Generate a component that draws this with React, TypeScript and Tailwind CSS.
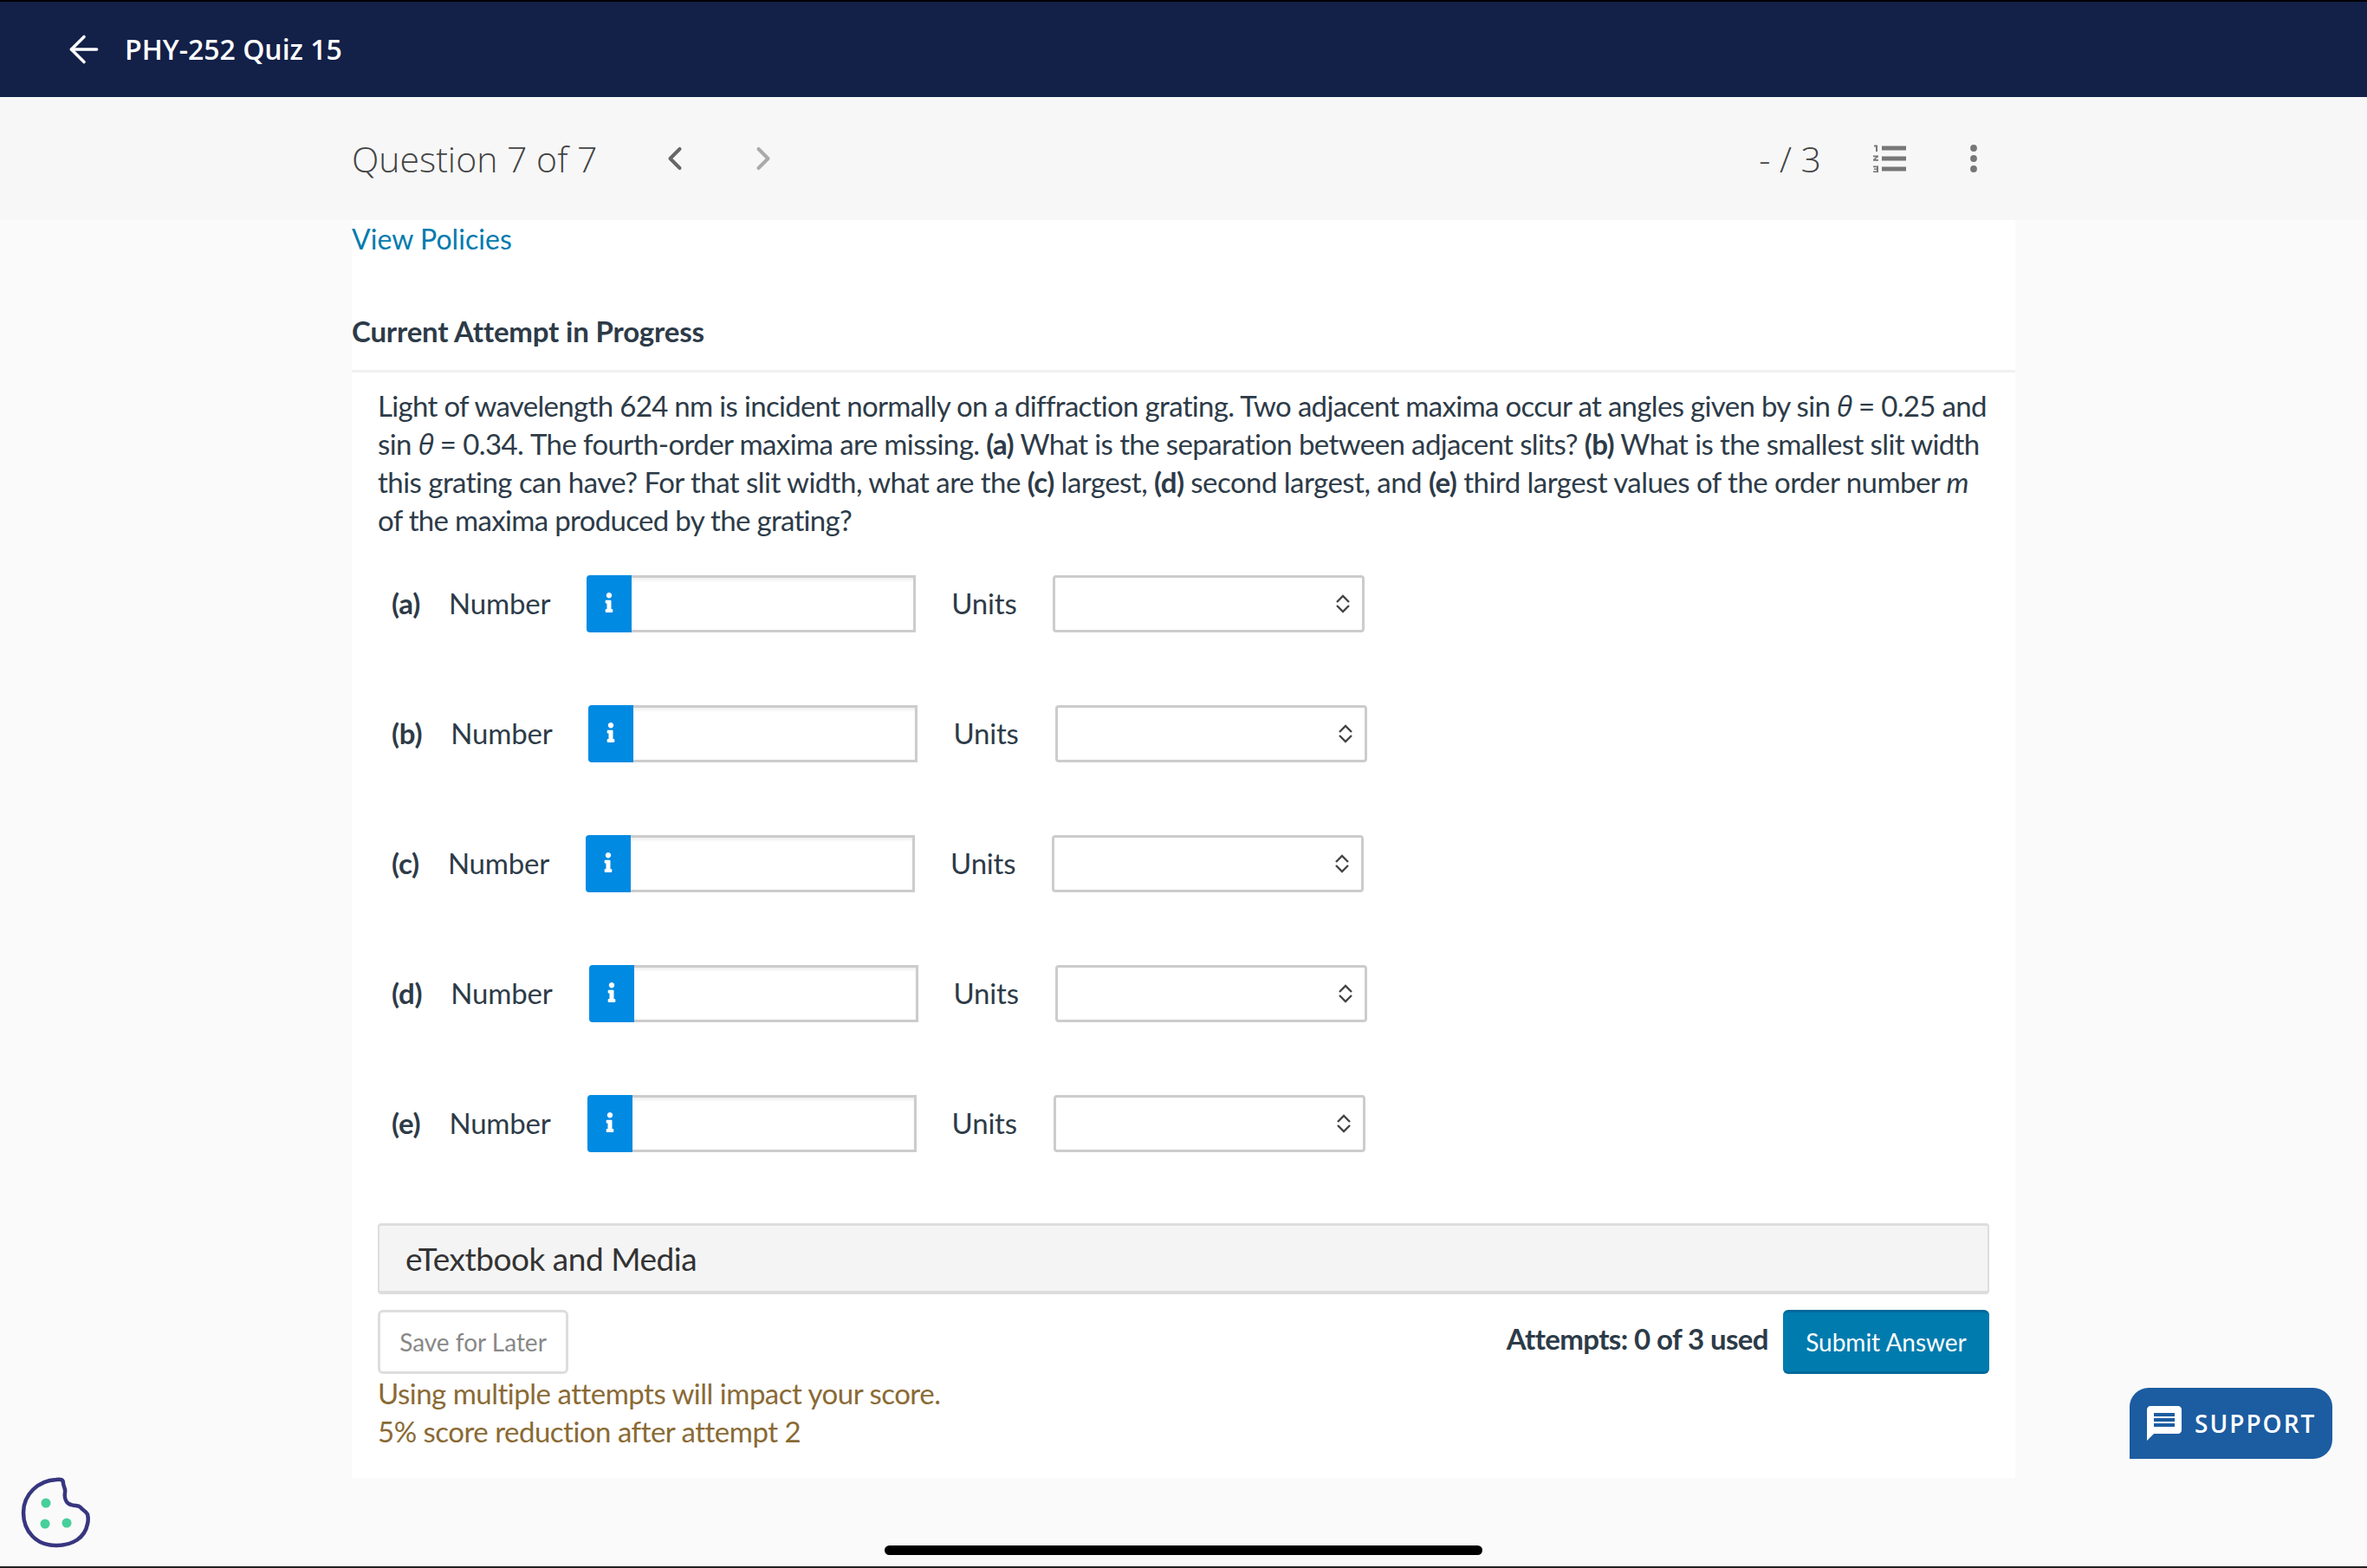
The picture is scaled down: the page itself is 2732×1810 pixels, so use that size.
import { ArrowLeft, ChevronLeft, ChevronRight } from 'lucide-react';
import { FaInfo } from 'react-icons/fa';
import { MdMessage } from 'react-icons/md';

const parts = ['a', 'b', 'c', 'd', 'e'];

const OrderedListIcon = () => (
  <svg width="38" height="32" viewBox="0 0 38 32" fill="#777">
    <rect x="10" y="1.5" width="28" height="5" />
    <rect x="10" y="13.5" width="28" height="5" />
    <rect x="10" y="25.5" width="28" height="5" />
    <path d="M1 0.5h4v7.5H3V2.4H1zM0 12.5h6v1.6L2.6 17H6v1.8H0v-1.7L3.4 14.2H0zM0 24.5h6v7.5H0v-1.6h4v-1.5H1v-1.3h3v-1.4H0z" />
  </svg>
);

const KebabIcon = () => (
  <svg width="8" height="32" viewBox="0 0 8 32" fill="#777">
    <circle cx="4" cy="4" r="3.9" />
    <circle cx="4" cy="16" r="3.9" />
    <circle cx="4" cy="28" r="3.9" />
  </svg>
);

const SelectArrows = () => (
  <svg width="20" height="22" viewBox="0 0 20 22" fill="none" stroke="#444" strokeWidth="2.4">
    <path d="M3 9l7-7 7 7M3 13l7 7 7-7" />
  </svg>
);

const CookieIcon = () => (
  <svg width="82" height="82" viewBox="0 0 82 82" fill="none">
    <path
      d="M41 3C46 2 49 3 49 7C49 11 52 13 51 18C50 24 52 30 58 32C63 34 66 32 69 35C71 38 75 39 77 43C78 47 78 50 77 54C74 70 60 79 41 79C18 79 3 63 3 41C3 20 20 4 41 3Z"
      stroke="#37367f"
      strokeWidth="4.5"
    />
    <circle cx="29" cy="30" r="5.5" fill="#46cf9b" />
    <circle cx="28" cy="54" r="5.5" fill="#46cf9b" />
    <circle cx="53" cy="53" r="5.5" fill="#46cf9b" />
  </svg>
);

const Theta = () => <i className="font-['Open_Sans',sans-serif] leading-[0]">θ</i>;

const AnswerRow = ({ part }: { part: string }) => (
  <div className="flex items-center h-[66px] pl-[16px] text-[33px] tracking-[-0.2px] text-[#2d3b48]">
    <span className="font-bold mr-[33px]">({part})</span>
    <span className="mr-[42px]">Number</span>
    <div className="flex h-[66px] w-[380px]">
      <div className="flex w-[52px] items-center justify-center rounded-l-[4px] bg-[#008ae2] pb-[4px]">
        <FaInfo className="w-[12px] h-[23px] text-white" />
      </div>
      <div className="flex-1 border-y-[3px] border-r-[3px] border-[#ccc] bg-white shadow-[inset_0_3px_3px_#f1f1f1]" />
    </div>
    <span className="ml-[41px] mr-[42px]">Units</span>
    <div className="flex h-[66px] w-[360px] items-center justify-end rounded-[4px] border-[3px] border-[#ccc] bg-white pr-[12px]">
      <SelectArrows />
    </div>
  </div>
);

export default function App() {
  return (
    <div className="relative h-[1810px] overflow-hidden bg-[#fafafa] font-['Lato',sans-serif]">
      {/* Top bar */}
      <header className="flex h-[112px] items-center border-t-[2px] border-black bg-[#132048] pl-[72px] text-white">
        <ArrowLeft className="w-[50px] h-[50px]" strokeWidth={1.7} />
        <span className="ml-[22px] font-['Open_Sans',sans-serif] text-[32px] font-semibold">PHY-252 Quiz 15</span>
      </header>

      {/* Question bar */}
      <div className="h-[142px] bg-[#f7f7f7]">
        <div className="mx-auto flex h-full w-[1920px] items-center">
          <span className="w-[351px] pt-[2px] font-['Open_Sans',sans-serif] text-[41px] font-light text-[#444]">Question 7 of 7</span>
          <ChevronLeft className="w-[44px] h-[44px] text-[#666]" strokeWidth={2.2} />
          <ChevronRight className="ml-[58px] w-[44px] h-[44px] text-[#aaa]" strokeWidth={2.2} />
          <span className="ml-auto pt-[2px] font-['Open_Sans',sans-serif] text-[41px] font-light text-[#444]">- / 3</span>
          <div className="ml-[60px] flex"><OrderedListIcon /></div>
          <div className="ml-[74px] mr-[44px] flex"><KebabIcon /></div>
        </div>
      </div>

      {/* Content card */}
      <main className="mx-auto h-[1452px] w-[1920px] bg-white">
        <a className="block text-[32px] leading-[44px] tracking-[0.05px] text-[#007bae]">View Policies</a>
        <h2 className="mt-[62px] h-[70px] border-b-[3px] border-[#f0f0f0] text-[33px] font-bold leading-[44px] tracking-[-0.18px] text-[#2d3b48]">
          Current Attempt in Progress
        </h2>
        <div className="px-[30px]">
          <p className="mt-[16px] whitespace-nowrap text-[33px] leading-[44px] text-[#2d3b48]">
            <span className="block tracking-[-0.68px]">Light of wavelength 624 nm is incident normally on a diffraction grating. Two adjacent maxima occur at angles given by sin <Theta /> = 0.25 and</span>
            <span className="block tracking-[-0.61px]">sin <Theta /> = 0.34. The fourth-order maxima are missing. <b>(a)</b> What is the separation between adjacent slits? <b>(b)</b> What is the smallest slit width</span>
            <span className="block tracking-[-0.53px]">this grating can have? For that slit width, what are the <b>(c)</b> largest, <b>(d)</b> second largest, and <b>(e)</b> third largest values of the order number <i>m</i></span>
            <span className="block tracking-[-0.68px]">of the maxima produced by the grating?</span>
          </p>
          <div className="mt-[42px] flex flex-col gap-[84px]">
            {parts.map((part) => (
              <AnswerRow key={part} part={part} />
            ))}
          </div>

          <div className="mt-[82px] flex h-[82px] items-center rounded-[4px] border-t-[3px] border-b-[4px] border-x-[2px] border-[#ddd] bg-[#f4f4f4] pl-[30px] text-[37px] tracking-[-0.47px] text-[#333]">
            eTextbook and Media
          </div>

          <div className="mt-[18px] flex items-start">
            <button className="h-[74px] w-[220px] rounded-[6px] border-[3px] border-[#ddd] bg-white text-[28px] text-[#888]">Save for Later</button>
            <span className="ml-auto mt-[11px] text-[33px] font-bold leading-[44px] tracking-[-0.6px] text-[#2d3b48]">Attempts: 0 of 3 used</span>
            <button className="ml-[17px] h-[74px] w-[238px] rounded-[6px] border-y-[3px] border-[#00699a] bg-[#007bae] text-[28px] text-white">Submit Answer</button>
          </div>
          <p className="mt-0 text-[33px] leading-[44px] tracking-[-0.5px] text-[#8a6a35]">
            Using multiple attempts will impact your score.<br />
            5% score reduction after attempt 2
          </p>
        </div>
      </main>

      {/* Floating items */}
      <div className="absolute left-[24px] top-[1705px]"><CookieIcon /></div>
      <button className="absolute left-[2458px] top-[1602px] flex h-[82px] w-[234px] items-center rounded-t-[22px] rounded-br-[22px] bg-[#1c5ca0] pl-[16px] font-['Open_Sans',sans-serif] text-[28px] font-semibold tracking-[2px] text-white">
        <MdMessage className="w-[48px] h-[48px]" />
        <span className="ml-[11px]">SUPPORT</span>
      </button>
      <div className="absolute left-[1021px] top-[1784px] h-[11px] w-[690px] rounded-full bg-black" />
      <div className="absolute bottom-0 left-0 h-[2px] w-full bg-[#222]" />
    </div>
  );
}
